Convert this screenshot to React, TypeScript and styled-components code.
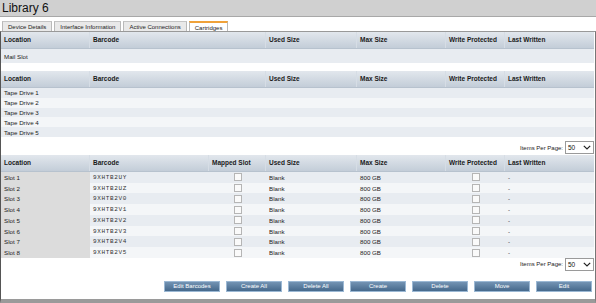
import React from 'react';
import styled, { createGlobalStyle } from 'styled-components';

const GlobalStyle = createGlobalStyle`
  html, body {
    margin: 0;
    padding: 0;
    background: #ffffff;
    font-family: "Liberation Sans", Arial, sans-serif;
    color: #1a1a1a;
  }
`;

const COLS_SHORT = '89px 176px 91px 89px 59px 1fr';
const COLS_SLOTS = '89px 119px 57px 91px 89px 59px 1fr';

const tapeDrives = ['Tape Drive 1', 'Tape Drive 2', 'Tape Drive 3', 'Tape Drive 4', 'Tape Drive 5'];

const slots = [
  { loc: 'Slot 1', code: '9XHTB2UY' },
  { loc: 'Slot 2', code: '9XHTB2UZ' },
  { loc: 'Slot 3', code: '9XHTB2V0' },
  { loc: 'Slot 4', code: '9XHTB2V1' },
  { loc: 'Slot 5', code: '9XHTB2V2' },
  { loc: 'Slot 6', code: '9XHTB2V3' },
  { loc: 'Slot 7', code: '9XHTB2V4' },
  { loc: 'Slot 8', code: '9XHTB2V5' },
];

const buttons = ['Edit Barcodes', 'Create All', 'Delete All', 'Create', 'Delete', 'Move', 'Edit'];

const App = () => {
  return (
    <Page>
      <GlobalStyle />
      <TitleBar>Library 6</TitleBar>
      <TabStrip>
        <Tab>Device Details</Tab>
        <Tab>Interface Information</Tab>
        <Tab>Active Connections</Tab>
        <Tab active>Cartridges</Tab>
      </TabStrip>
      <Panel>
        <HeaderRow cols={COLS_SHORT}>
          <HeadCell>Location</HeadCell>
          <HeadCell>Barcode</HeadCell>
          <HeadCell>Used Size</HeadCell>
          <HeadCell>Max Size</HeadCell>
          <HeadCell>Write Protected</HeadCell>
          <HeadCell>Last Written</HeadCell>
        </HeaderRow>
        <Row cols={COLS_SHORT} h={14} odd>
          <Cell>Mail Slot</Cell>
          <Cell />
          <Cell />
          <Cell />
          <Cell />
          <Cell />
        </Row>

        <Spacer h={8} />

        <HeaderRow cols={COLS_SHORT}>
          <HeadCell>Location</HeadCell>
          <HeadCell>Barcode</HeadCell>
          <HeadCell>Used Size</HeadCell>
          <HeadCell>Max Size</HeadCell>
          <HeadCell>Write Protected</HeadCell>
          <HeadCell>Last Written</HeadCell>
        </HeaderRow>
        {tapeDrives.map((name, i) => (
          <Row key={name} cols={COLS_SHORT} h={9.8} odd={i % 2 === 0}>
            <Cell>{name}</Cell>
            <Cell />
            <Cell />
            <Cell />
            <Cell />
            <Cell />
          </Row>
        ))}

        <PagerRow>
          <PagerLabel>Items Per Page:</PagerLabel>
          <Select>
            <span>50</span>
            <Chevron />
          </Select>
        </PagerRow>

        <HeaderRow cols={COLS_SLOTS}>
          <HeadCell>Location</HeadCell>
          <HeadCell>Barcode</HeadCell>
          <HeadCell>Mapped Slot</HeadCell>
          <HeadCell>Used Size</HeadCell>
          <HeadCell>Max Size</HeadCell>
          <HeadCell>Write Protected</HeadCell>
          <HeadCell>Last Written</HeadCell>
        </HeaderRow>
        {slots.map((s, i) => (
          <Row key={s.loc} cols={COLS_SLOTS} h={10.75} odd={i % 2 === 0}>
            <LocCell>{s.loc}</LocCell>
            <Code>{s.code}</Code>
            <CheckCell>
              <Box />
            </CheckCell>
            <Cell>Blank</Cell>
            <Cell>800 GB</Cell>
            <CheckCell>
              <Box />
            </CheckCell>
            <Cell>-</Cell>
          </Row>
        ))}

        <PagerRow bottom>
          <PagerLabel>Items Per Page:</PagerLabel>
          <Select>
            <span>50</span>
            <Chevron />
          </Select>
        </PagerRow>

        <ButtonBar>
          {buttons.map((b) => (
            <ActionButton key={b}>{b}</ActionButton>
          ))}
        </ButtonBar>
      </Panel>
    </Page>
  );
};

const Chevron = () => (
  <svg width="8" height="5" viewBox="0 0 8 5">
    <path d="M0.8 0.8 L4 4 L7.2 0.8" fill="none" stroke="#222" strokeWidth="1.2" />
  </svg>
);

const Page = styled.div`
  width: 596px;
  height: 303px;
  overflow: hidden;
  display: flex;
  flex-direction: column;
`;

const TitleBar = styled.div`
  height: 16px;
  background: #d0d0d0;
  border-bottom: 1px solid #a8a8a8;
  padding-left: 2px;
  font-size: 12px;
  line-height: 17px;
  color: #111;
`;

const TabStrip = styled.div`
  display: flex;
  gap: 2px;
  padding: 3px 0 0 2px;
  height: 11px;
  align-items: flex-end;
`;

const Tab = styled.div<{ active?: boolean }>`
  height: ${(p) => (p.active ? '10px' : '10px')};
  padding: 0 5px;
  font-size: 6px;
  line-height: 10px;
  color: #222;
  background: ${(p) => (p.active ? '#ffffff' : '#e9e9e9')};
  border: 1px solid #b9b9b9;
  border-top: ${(p) => (p.active ? '2px solid #f0a23a' : '1px solid #c4c4c4')};
  border-bottom: none;
  margin-bottom: 0;
  box-sizing: border-box;
`;

const Panel = styled.div`
  flex: 1;
  display: flex;
  flex-direction: column;
  border-left: 1px solid #555;
  border-right: 1px solid #777;
  border-top: 1px solid #999;
  border-bottom: 4px solid #9a9a9a;
  padding-right: 1px;
`;

const HeaderRow = styled.div<{ cols: string }>`
  display: grid;
  grid-template-columns: ${(p) => p.cols};
  height: 17px;
  background: linear-gradient(#e2e7ed, #c3cdd8);
  border-bottom: 1px solid #b7c2ce;
  box-sizing: border-box;
`;

const HeadCell = styled.div`
  font-size: 6.5px;
  font-weight: 700;
  line-height: 16px;
  padding-left: 3px;
  border-right: 1px solid #d6dde5;
  white-space: nowrap;
  overflow: hidden;
  &:last-child {
    border-right: none;
  }
`;

const Row = styled.div<{ cols: string; h: number; odd?: boolean }>`
  display: grid;
  grid-template-columns: ${(p) => p.cols};
  height: ${(p) => p.h}px;
  background: ${(p) => (p.odd ? '#e8ecf1' : '#f4f6f8')};
  align-items: center;
`;

const Cell = styled.div`
  font-size: 6.2px;
  padding-left: 3px;
  white-space: nowrap;
  color: #1a1a1a;
`;

const LocCell = styled(Cell)`
  align-self: stretch;
  display: flex;
  align-items: center;
  background: #dcdcdc;
`;

const Code = styled(Cell)`
  font-family: "Liberation Mono", "DejaVu Sans Mono", monospace;
  font-size: 6px;
  letter-spacing: 0.65px;
  color: #333;
`;

const CheckCell = styled.div`
  display: flex;
  justify-content: center;
`;

const Box = styled.div`
  width: 6px;
  height: 6px;
  border: 1px solid #b5b5b5;
  background: #fafafa;
`;

const Spacer = styled.div<{ h: number }>`
  height: ${(p) => p.h}px;
`;

const PagerRow = styled.div<{ bottom?: boolean }>`
  display: flex;
  justify-content: flex-end;
  align-items: center;
  gap: 2px;
  height: ${(p) => (p.bottom ? '13px' : '14px')};
  margin-top: ${(p) => (p.bottom ? '0' : '4px')};
`;

const PagerLabel = styled.span`
  font-size: 6px;
  color: #222;
`;

const Select = styled.div`
  width: 29px;
  height: 13px;
  box-sizing: border-box;
  border: 1px solid #9a9a9a;
  background: #fff;
  display: flex;
  align-items: center;
  justify-content: space-between;
  padding: 0 2px 0 2px;
  font-size: 6.5px;
  color: #111;
`;

const ButtonBar = styled.div`
  display: flex;
  justify-content: flex-end;
  gap: 6px;
  padding: 10px 2px 0 0;
`;

const ActionButton = styled.button`
  width: 56px;
  height: 11px;
  padding: 0;
  border: 1px solid #9bb8d4;
  background: linear-gradient(#7393b3, #46698c);
  color: #fff;
  font-family: "Liberation Sans", Arial, sans-serif;
  font-size: 6px;
  line-height: 9px;
  cursor: pointer;
`;

export default App;
